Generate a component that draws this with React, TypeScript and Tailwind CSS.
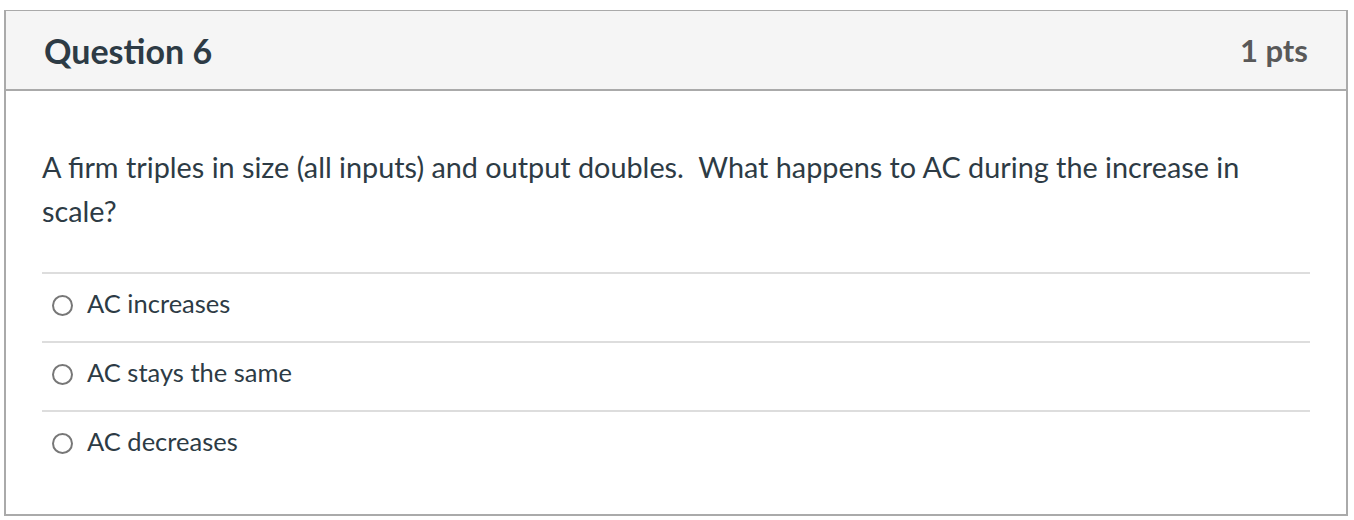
import React from 'react';

const answers = ['AC increases', 'AC stays the same', 'AC decreases'];

export default function App() {
  return (
    <div className="w-[1354px] h-[520px] bg-white pt-[10px] pl-[4px]" style={{ fontFamily: 'Lato, "Noto Sans", sans-serif' }}>
      <div className="w-[1344px] h-[506px] border-2 border-t border-[#aaaaaa] flex flex-col">
        {/* Header */}
        <div className="h-[80px] bg-[#f5f5f5] border-b-2 border-[#aaaaaa] flex items-center justify-between px-[38px]">
          <h2 className="text-[34px] font-bold text-[#2d3b45]">Question 6</h2>
          <span className="text-[31px] font-bold text-[#595959]">1 pts</span>
        </div>

        {/* Body */}
        <div className="px-[36px] pt-[54px]">
          <p className="text-[28.8px] leading-[44px] text-[#2d3b45] pr-[40px]">
            A firm triples in size (all inputs) and output doubles.&nbsp; What happens to AC during the increase in scale?
          </p>
          <div className="mt-[39px]">
            {answers.map((a) => (
              <div key={a} className="h-[69px] border-t-2 border-[#dddddd] flex items-center pl-[10px] pb-[8px]">
                <span className="w-[21px] h-[21px] mt-[3px] rounded-full border-2 border-[#777777] bg-white mr-[14px]" />
                <span className="text-[25.5px] text-[#2d3b45]">{a}</span>
              </div>
            ))}
          </div>
        </div>
      </div>
    </div>
  );
}
